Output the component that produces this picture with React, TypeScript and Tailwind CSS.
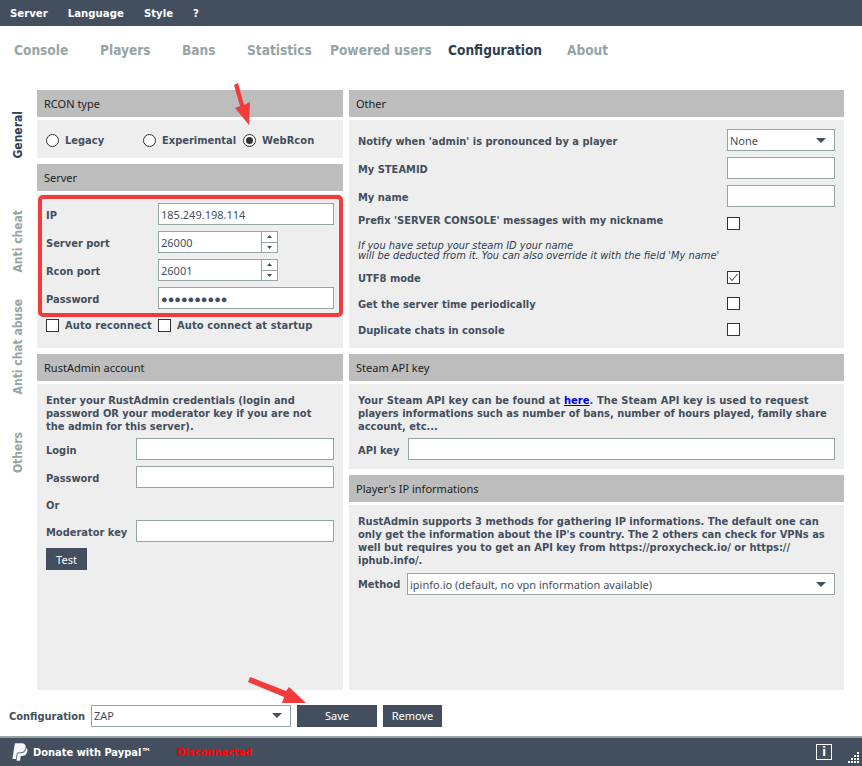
import React from 'react';
import { FaPaypal } from 'react-icons/fa';

const Caret = () => (
  <svg width="10" height="5" viewBox="0 0 10 5" className="shrink-0">
    <path d="M0 0h10L5 5z" fill="#434f5e" />
  </svg>
);

const Check = ({ checked = false }: { checked?: boolean }) => (
  <span className="w-[13px] h-[13px] bg-white border border-[#333] flex items-center justify-center shrink-0">
    {checked && (
      <svg width="11" height="11" viewBox="0 0 11 11">
        <path d="M1.5 5.5 4 8.500 9.500 2" fill="none" stroke="#555" strokeWidth="1.1" />
      </svg>
    )}
  </span>
);

const Radio = ({ on = false }: { on?: boolean }) => (
  <span className="w-[13px] h-[13px] rounded-full bg-white border border-[#333] flex items-center justify-center shrink-0">
    {on && <span className="w-[7px] h-[7px] rounded-full bg-[#333]" />}
  </span>
);

const Input = ({ className = '', children }: { className?: string; children?: React.ReactNode }) => (
  <div className={`h-[22px] bg-white border border-[#95a5a6] flex items-center px-[2px] text-[11px] text-[#434f5e] font-normal font-['Noto_Sans',sans-serif] ${className}`}>
    {children}
  </div>
);

const Select = ({ className = '', value }: { className?: string; value: string }) => (
  <Input className={`justify-between pr-[8px] ${className}`}>
    <span>{value}</span>
    <Caret />
  </Input>
);

const Spin = ({ value }: { value: string }) => (
  <div className="flex w-[120px] h-[22px]">
    <Input className="w-[104px]">{value}</Input>
    <div className="w-[16px] flex flex-col border border-l-0 border-[#95a5a6] bg-white">
      <span className="flex-1 flex items-center justify-center border-b border-[#95a5a6]">
        <svg width="5" height="3" viewBox="0 0 5 3"><path d="M0 3h5L2.500 0z" fill="#434f5e" /></svg>
      </span>
      <span className="flex-1 flex items-center justify-center">
        <svg width="5" height="3" viewBox="0 0 5 3"><path d="M0 0h5L2.500 3z" fill="#434f5e" /></svg>
      </span>
    </div>
  </div>
);

const Head = ({ title }: { title: string }) => (
  <div className="h-[27px] mb-[3px] bg-[#bdbdbd] px-[7px] flex items-center text-[11px] font-normal text-[#222] font-['Noto_Sans',sans-serif]">{title}</div>
);

const Label = ({ text, className = '' }: { text: string; className?: string }) => (
  <span className={`pt-[2px] ${className}`}>{text}</span>
);

const SideTab = ({ label, className }: { label: string; className: string }) => (
  <div className={`flex items-center justify-center ${className}`}>
    <span className="[writing-mode:vertical-rl] rotate-180 whitespace-nowrap text-[12px] font-bold">{label}</span>
  </div>
);

const Button = ({ label, className }: { label: string; className: string }) => (
  <div className={`h-[22px] bg-[#434f5e] text-white font-normal text-[11px] flex items-center justify-center font-['Noto_Sans',sans-serif] ${className}`}>{label}</div>
);

export default function App() {
  return (
    <div className="font-['DejaVu_Sans_Condensed','Noto_Sans',sans-serif] relative w-[862px] h-[766px] bg-white flex flex-col text-[11px] leading-[13px] font-bold text-[#434f5e] overflow-hidden">
      <div className="h-[26px] bg-[#434f5e] flex items-center pl-[10px] gap-[20px] text-white text-[11.300px]">
        <span>Server</span>
        <span>Language</span>
        <span>Style</span>
        <span>?</span>
      </div>

      <div className="h-[64px] flex pl-[14px] pt-[16px] text-[13.600px] leading-[17px] text-[#95a5a6]">
        <span className="w-[86px]">Console</span>
        <span className="w-[82px]">Players</span>
        <span className="w-[65px]">Bans</span>
        <span className="w-[83px]">Statistics</span>
        <span className="w-[118px]">Powered users</span>
        <span className="w-[119px] text-[#2c3e50]">Configuration</span>
        <span>About</span>
      </div>

      <div className="h-[600px] flex">
        <div className="w-[37px] flex flex-col text-[#95a5a6]">
          <SideTab label="General" className="h-[44px] mt-[23px] text-[#2c3e50]" />
          <SideTab label="Anti cheat" className="h-[62px] mt-[53px]" />
          <SideTab label="Anti chat abuse" className="h-[97px] mt-[26px]" />
          <SideTab label="Others" className="h-[40px] mt-[38px]" />
        </div>

        <div className="w-[306px] flex flex-col">
          <Head title="RCON type" />
          <div className="h-[38px] mb-[6px] bg-[#eeeeee] flex items-center pl-[9px] pt-[2px]">
            <label className="flex items-center gap-[6px] w-[97px]"><Radio />Legacy</label>
            <label className="flex items-center gap-[6px] w-[100px]"><Radio />Experimental</label>
            <label className="flex items-center gap-[6px] tracking-[0.1px]"><Radio on />WebRcon</label>
          </div>

          <Head title="Server" />
          <div className="h-[154px] mb-[6px] bg-[#eeeeee] px-[9px] pt-[9px] flex flex-col gap-[6px]">
            <div className="flex items-center justify-between"><Label text="IP" /><Input className="w-[176px]">185.249.198.114</Input></div>
            <div className="flex items-center"><Label text="Server port" className="w-[112px]" /><Spin value="26000" /></div>
            <div className="flex items-center"><Label text="Rcon port" className="w-[112px]" /><Spin value="26001" /></div>
            <div className="flex items-center justify-between"><Label text="Password" /><Input className="w-[176px] text-[11.500px]">●●●●●●●●●●</Input></div>
            <div className="flex items-center mt-[4px]">
              <label className="flex items-center gap-[6px] w-[112px] tracking-[0.1px]"><Check />Auto reconnect</label>
              <label className="flex items-center gap-[6px] tracking-[0.1px]"><Check />Auto connect at startup</label>
            </div>
          </div>

          <Head title="RustAdmin account" />
          <div className="flex-1 bg-[#eeeeee] px-[9px] pt-[10px]">
            <p className="h-[44px] w-[275px]">Enter your RustAdmin credentials (login and password OR your moderator key if you are not the admin for this server).</p>
            <div className="flex items-center justify-between"><Label text="Login" /><Input className="w-[198px]" /></div>
            <div className="flex items-center justify-between mt-[6px]"><Label text="Password" /><Input className="w-[198px]" /></div>
            <div className="h-[32px] flex items-center"><Label text="Or" /></div>
            <div className="flex items-center justify-between"><Label text="Moderator key" /><Input className="w-[198px]" /></div>
            <Button label="Test" className="w-[41px] mt-[6px]" />
          </div>
        </div>

        <div className="w-[495px] ml-[6px] flex flex-col">
          <Head title="Other" />
          <div className="h-[228px] mb-[6px] bg-[#eeeeee] pl-[9px] pr-[9px] pt-[9px] flex flex-col">
            <div className="flex items-center justify-between"><Label text="Notify when 'admin' is pronounced by a player" /><Select className="w-[108px]" value="None" /></div>
            <div className="flex items-center justify-between mt-[6px]"><Label text="My STEAMID" /><Input className="w-[108px]" /></div>
            <div className="flex items-center justify-between mt-[6px]"><Label text="My name" /><Input className="w-[108px]" /></div>
            <div className="flex items-start justify-between mt-[6px] h-[17px]">
              <span className="pt-[1px]">Prefix 'SERVER CONSOLE' messages with my nickname</span>
              <span className="w-[108px] flex pt-[4px]"><Check /></span>
            </div>
            <p className="mt-[11px] h-[26px] text-[9.900px] leading-[10px] italic font-normal text-[#2c3e50] font-['DejaVu_Sans',sans-serif]">
              If you have setup your steam ID your name<br />will be deducted from it. You can also override it with the field 'My name'
            </p>
            <div className="flex items-center justify-between h-[13px] mt-[4px]"><Label text="UTF8 mode" /><span className="w-[108px] flex"><Check checked /></span></div>
            <div className="flex items-center justify-between h-[13px] mt-[13px]"><Label text="Get the server time periodically" /><span className="w-[108px] flex"><Check /></span></div>
            <div className="flex items-center justify-between h-[13px] mt-[13px]"><Label text="Duplicate chats in console" /><span className="w-[108px] flex"><Check /></span></div>
          </div>

          <Head title="Steam API key" />
          <div className="h-[85px] mb-[6px] bg-[#eeeeee] px-[9px] pt-[10px]">
            <div className="h-[44px]">
              <div className="flex whitespace-pre tracking-[0.08px]">
                <span>Your Steam API key can be found at </span>
                <a className="text-[#0000ee] underline">here</a>
                <span>. The Steam API key is used to request</span>
              </div>
              <p>players informations such as number of bans, number of hours played, family share account, etc...</p>
            </div>
            <div className="flex items-center justify-between"><Label text="API key" /><Input className="w-[427px]" /></div>
          </div>

          <Head title="Player's IP informations" />
          <div className="flex-1 bg-[#eeeeee] px-[9px] pt-[10px]">
            <p className="h-[58px]">RustAdmin supports 3 methods for gathering IP informations. The default one can only get the information about the IP's country. The 2 others can check for VPNs as well but requires you to get an API key from https://proxycheck.io/ or https://<br />iphub.info/.</p>
            <div className="flex items-center justify-between"><span>Method</span><Select className="w-[428px]" value="ipinfo.io (default, no vpn information available)" /></div>
          </div>
        </div>
      </div>

      <div className="h-[46px] flex items-center pl-[9px] pt-[5px] shrink-0">
        <Label text="Configuration" className="w-[82px]" />
        <Select className="w-[200px]" value="ZAP" />
        <Button label="Save" className="w-[80px] ml-[6px]" />
        <Button label="Remove" className="w-[59px] ml-[6px]" />
      </div>

      <div className="flex-1 bg-[#434f5e] border-t-2 border-[#95a5a6] flex items-center pl-[11px] pr-[2px] text-white relative">
        <FaPaypal className="w-[18px] h-[20px] text-[#f4f6f8]" />
        <span className="ml-[4px] w-[144px]">Donate with Paypal™</span>
        <span className="text-[#ff0000]">Disconnected</span>
        <span className="ml-auto mr-[28px] w-[16px] h-[16px] border border-white flex items-center justify-center text-[12px]">i</span>
        <svg width="12" height="12" viewBox="0 0 12 12" className="absolute right-[2px] bottom-[2px]">
          <path d="M9 0h2v2H9zM6 3h2v2H6zM9 3h2v2H9zM3 6h2v2H3zM6 6h2v2H6zM9 6h2v2H9zM0 9h2v2H0zM3 9h2v2H3zM6 9h2v2H6zM9 9h2v2H9z" fill="#ffffff" />
        </svg>
      </div>

      {/* annotations drawn on top of the screenshot */}
      <div className="absolute left-[38px] top-[195px] w-[305px] h-[122px] border-4 border-[#f23c3c] rounded-[5px] pointer-events-none" />
      <svg className="absolute left-[225px] top-[75px] pointer-events-none" width="50" height="60" viewBox="0 0 50 60">
        <path d="M9 10 13 8 19 30 25 27 24 50 10 33 15 31z" fill="#f23c3c" />
      </svg>
      <svg className="absolute left-[240px] top-[670px] pointer-events-none" width="80" height="40" viewBox="0 0 80 40">
        <path d="M10 7 46 21 49 17 66 33 42 33 44 27 8 12z" fill="#f23c3c" />
      </svg>
    </div>
  );
}
